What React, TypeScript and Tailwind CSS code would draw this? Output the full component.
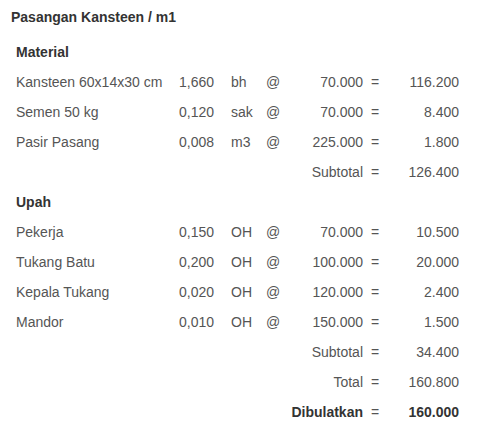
type Row = {
  name: string
  qty: string
  unit: string
  price: string
  total: string
}

const material: Row[] = [
  { name: "Kansteen 60x14x30 cm", qty: "1,660", unit: "bh", price: "70.000", total: "116.200" },
  { name: "Semen 50 kg", qty: "0,120", unit: "sak", price: "70.000", total: "8.400" },
  { name: "Pasir Pasang", qty: "0,008", unit: "m3", price: "225.000", total: "1.800" },
]

const upah: Row[] = [
  { name: "Pekerja", qty: "0,150", unit: "OH", price: "70.000", total: "10.500" },
  { name: "Tukang Batu", qty: "0,200", unit: "OH", price: "100.000", total: "20.000" },
  { name: "Kepala Tukang", qty: "0,020", unit: "OH", price: "120.000", total: "2.400" },
  { name: "Mandor", qty: "0,010", unit: "OH", price: "150.000", total: "1.500" },
]

const grid = "grid grid-cols-[154px_44px_52px_24px_73px_27px_69px] h-[30px] items-center"

function ItemRow({ row }: { row: Row }) {
  return (
    <div className={grid}>
      <span>{row.name}</span>
      <span className="text-right">{row.qty}</span>
      <span className="pl-[17px]">{row.unit}</span>
      <span>@</span>
      <span className="text-right">{row.price}</span>
      <span className="pl-[8px]">=</span>
      <span className="text-right">{row.total}</span>
    </div>
  )
}

function SumRow({ label, value, bold }: { label: string; value: string; bold?: boolean }) {
  return (
    <div className={grid}>
      <span className={`col-span-5 text-right ${bold ? "font-bold text-[#333]" : ""}`}>{label}</span>
      <span className="pl-[8px]">=</span>
      <span className={`text-right ${bold ? "font-bold text-[#333]" : ""}`}>{value}</span>
    </div>
  )
}

function Heading({ children }: { children: string }) {
  return <div className="h-[30px] flex items-center font-bold text-[#333]">{children}</div>
}

export default function App() {
  return (
    <div className="w-[498px] h-[431px] bg-white font-['Liberation_Sans',Arial,sans-serif] text-[14px] text-[#555]">
      <div className="pt-[7px] pl-[11px] h-[37px]">
        <h1 className="font-bold text-[#333] leading-[20px]">Pasangan Kansteen / m1</h1>
      </div>
      <div className="pl-[16px]">
        <Heading>Material</Heading>
        {material.map((r) => (
          <ItemRow key={r.name} row={r} />
        ))}
        <SumRow label="Subtotal" value="126.400" />
        <Heading>Upah</Heading>
        {upah.map((r) => (
          <ItemRow key={r.name} row={r} />
        ))}
        <SumRow label="Subtotal" value="34.400" />
        <SumRow label="Total" value="160.800" />
        <SumRow label="Dibulatkan" value="160.000" bold />
      </div>
    </div>
  )
}
